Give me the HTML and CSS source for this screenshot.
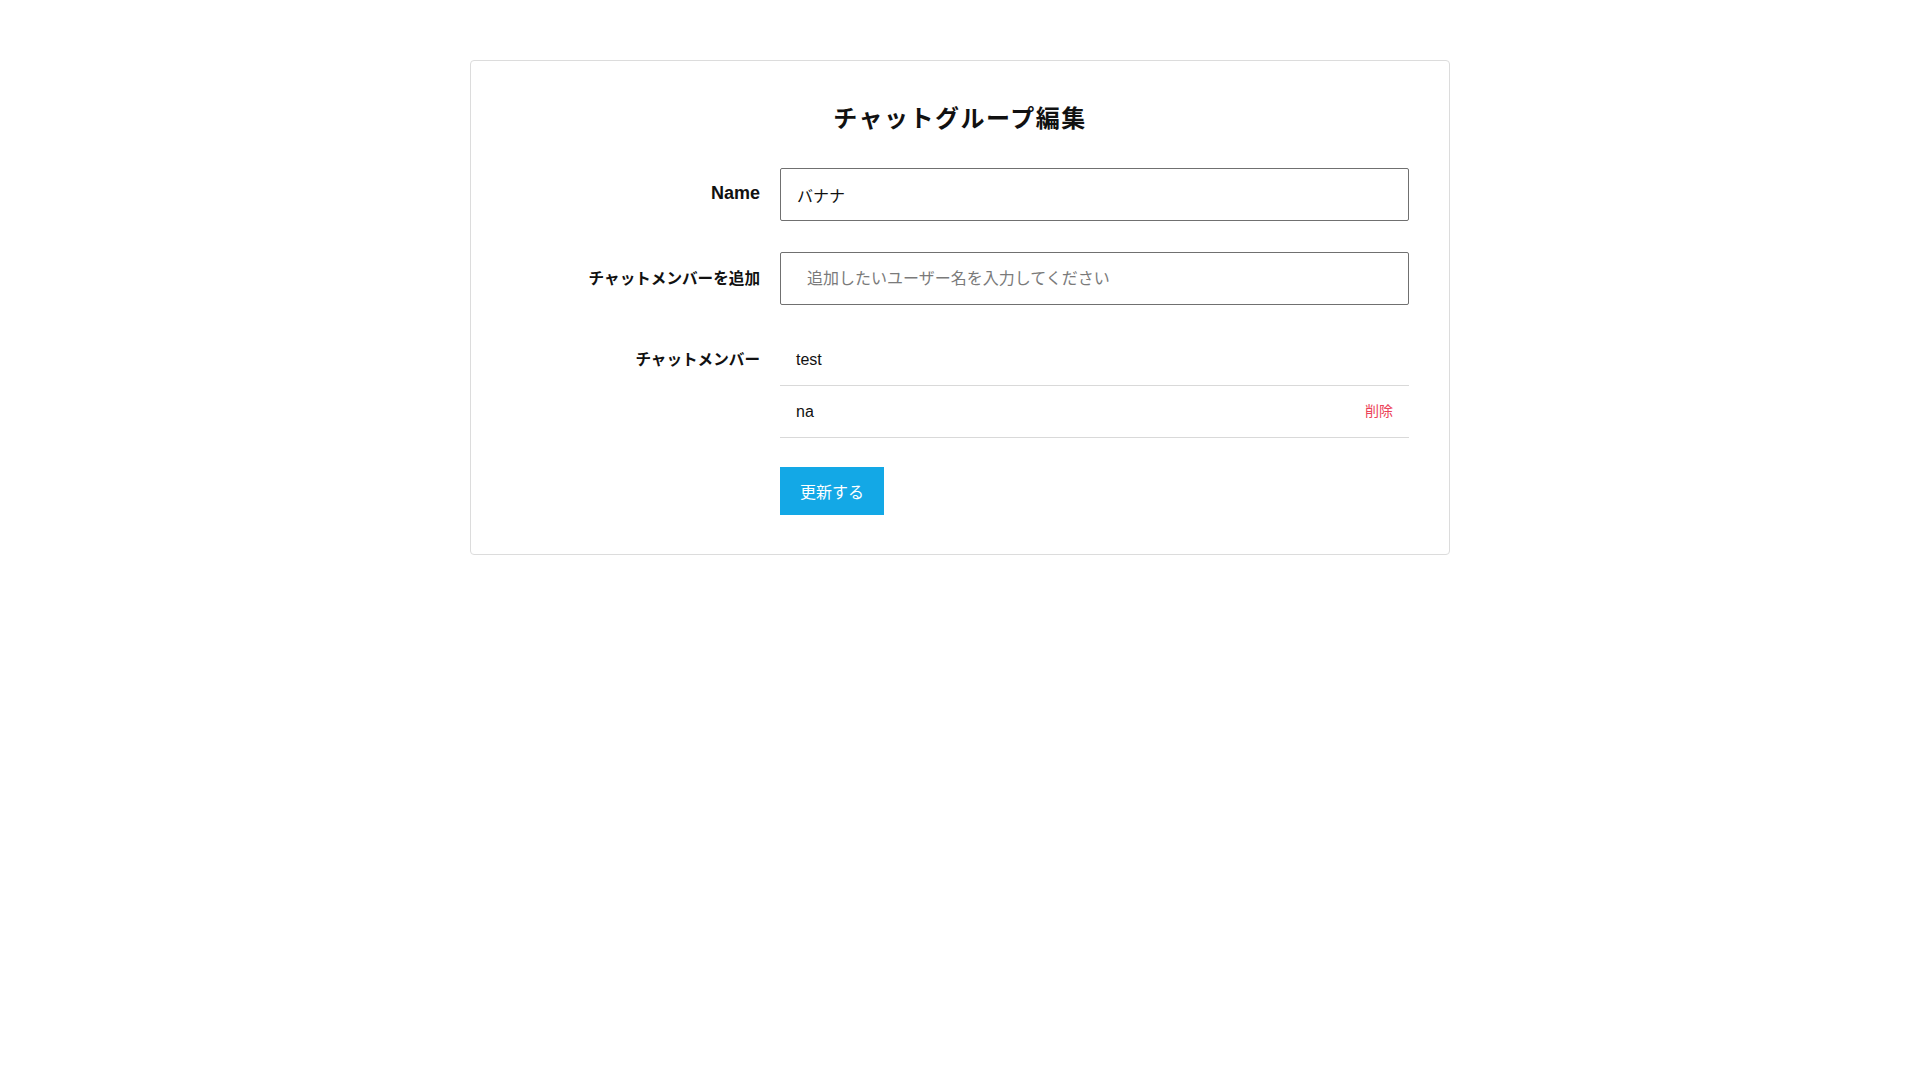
FILE: index.html
```html
<!DOCTYPE html>
<html lang="ja">
<head>
<meta charset="utf-8">
<title>チャットグループ編集</title>
<link rel="stylesheet" href="styles.css">
</head>
<body>
<div class="page">
  <div class="card">
    <h1 class="title">チャットグループ編集</h1>
    <form class="form">
      <div class="row row-name">
        <label class="label label-latin" for="name">Name</label>
        <input id="name" class="input input-name" type="text" value="バナナ">
      </div>
      <div class="row row-add">
        <label class="label" for="add">チャットメンバーを追加</label>
        <input id="add" class="input input-add" type="text" placeholder="追加したいユーザー名を入力してください">
      </div>
      <div class="row row-members">
        <div class="label label-top">チャットメンバー</div>
        <ul class="members">
          <li class="member"><span class="member-name">test</span></li>
          <li class="member"><span class="member-name">na</span><a class="remove" href="#">削除</a></li>
        </ul>
      </div>
      <div class="row row-submit">
        <div class="label"></div>
        <div class="actions"><button type="button" class="btn">更新する</button></div>
      </div>
    </form>
  </div>
</div>
</body>
</html>
```

FILE: styles.css
```css
* { box-sizing: border-box; }
html, body { margin: 0; padding: 0; background: #fff; }
body {
  font-family: "Liberation Sans", "Noto Sans CJK JP", sans-serif;
  color: #111;
}
.page {
  padding-top: 60px;
  display: flex;
  justify-content: center;
}
.card {
  width: 980px;
  border: 1px solid #dcdcdc;
  border-radius: 4px;
  padding: 40px 40px 39px 40px;
}
.title {
  margin: 0 0 32px;
  text-align: center;
  font-size: 24px;
  line-height: 35px;
  font-weight: 700;
  letter-spacing: 1.5px;
  color: #111;
}
.form { margin: 0; }
.row {
  display: grid;
  grid-template-columns: 249px 629px;
  column-gap: 20px;
  align-items: center;
}
.row-add { margin-top: 31px; }
.row-members { margin-top: 29px; align-items: start; }
.row-submit { margin-top: 29px; }
.label {
  text-align: right;
  font-size: 15.6px;
  font-weight: 700;
  color: #111;
  line-height: 24px;
}
.label-latin { font-size: 18px; margin-top: -4px; }
.label-top { padding-top: 13px; line-height: 25px; }
.input {
  display: block;
  width: 100%;
  height: 53px;
  border: 1px solid #707070;
  border-radius: 2px;
  font-family: "Liberation Sans", "Noto Sans CJK JP", sans-serif;
  font-size: 16px;
  color: #111;
  background: #fff;
  outline: none;
}
.input-name { padding: 0 16px; }
.input-add { padding: 0 26px; }
.input::placeholder { color: #7a7a7a; }
.members {
  list-style: none;
  margin: 0;
  padding: 0;
}
.member {
  display: flex;
  justify-content: space-between;
  align-items: center;
  padding: 13px 16px;
  line-height: 25px;
  font-size: 16px;
  border-bottom: 1px solid #d9d9d9;
}
.member-name { color: #111; }
.remove {
  color: #ec4158;
  text-decoration: none;
  font-size: 14px;
}
.actions { display: flex; }
.btn {
  height: 48px;
  padding: 0 20px;
  border: none;
  border-radius: 0;
  background: #13a8e6;
  color: #fff;
  font-family: "Liberation Sans", "Noto Sans CJK JP", sans-serif;
  font-size: 16px;
  cursor: pointer;
}
```
